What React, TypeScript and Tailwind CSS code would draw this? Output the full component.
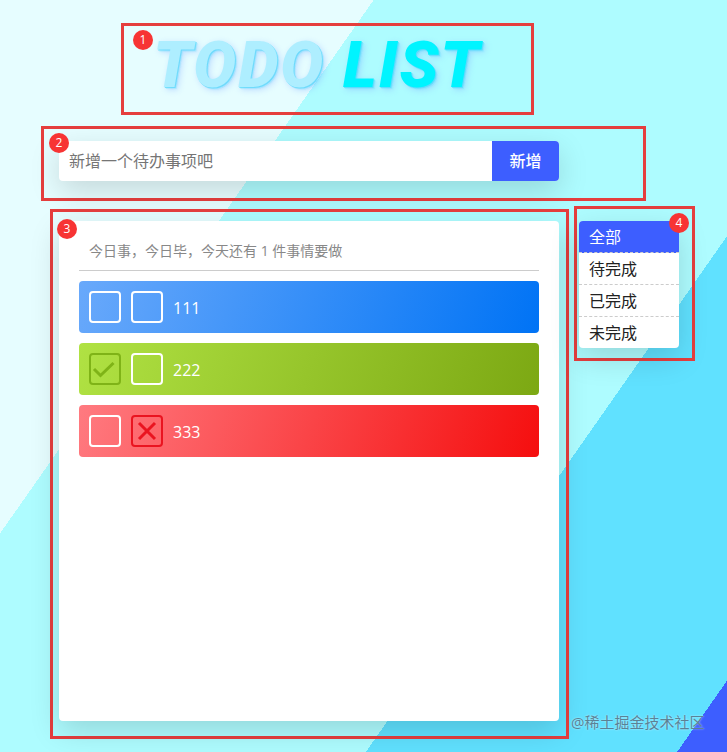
import React from "react";

const font = "font-['Open_Sans','Noto_Sans_CJK_SC',sans-serif]";

function Badge({ n, className }: { n: number; className: string }) {
  return (
    <span className={`absolute z-10 flex h-5 w-5 items-center justify-center rounded-full bg-[#f73434] text-xs text-white ${className}`}>
      {n}
    </span>
  );
}

function Box({ mark }: { mark: "check" | "cross" | null }) {
  if (mark === "check") {
    return (
      <span className="h-8 w-8 rounded border-2 border-[#7fb317]">
        <svg width="28" height="28" viewBox="0 0 28 28" fill="none" stroke="#7fb317" strokeWidth="3">
          <path d="M3 14l6.5 6.5L22.5 8" />
        </svg>
      </span>
    );
  }
  if (mark === "cross") {
    return (
      <span className="h-8 w-8 rounded border-2 border-[#ea1420]">
        <svg width="28" height="28" viewBox="0 0 28 28" fill="none" stroke="#ea1420" strokeWidth="3">
          <path d="M6 6l16 16M22 6L6 22" />
        </svg>
      </span>
    );
  }
  return <span className="h-8 w-8 rounded border-2 border-white" />;
}

function Row({ bg, text, a, b }: { bg: string; text: string; a: "check" | null; b: "cross" | null }) {
  return (
    <div className={`flex h-[52px] items-center gap-2.5 rounded pl-2.5 text-white ${bg}`}>
      <Box mark={a} />
      <Box mark={b} />
      <span className="pt-0.5 text-base">{text}</span>
    </div>
  );
}

export default function App() {
  return (
    <div className={`relative h-[752px] w-[727px] overflow-hidden bg-[linear-gradient(125deg,#e6fdff_306px,#aefcff_306px,#aefcff_731px,#60e1ff_731px,#60e1ff_986px,#3d5eff_986px)] pt-[23px] ${font}`}>
      <div className="relative ml-[121px] h-[92px] w-[413px] border-[3px] border-[#e53e3e] pl-[29px]">
        <Badge n={1} className="left-[9px] top-[4px]" />
        <h1 className="h-[85px] w-[345px] bg-[linear-gradient(125deg,#aeeeff_165px,#00f4ff_165px)] bg-clip-text font-['Roboto',sans-serif] text-[64px] font-black italic leading-[79px] tracking-[2px] text-transparent [filter:drop-shadow(1px_1px_0_rgba(60,215,250,0.22))_drop-shadow(1px_1px_0_rgba(60,215,250,0.22))_drop-shadow(1px_1px_0_rgba(60,215,250,0.22))_drop-shadow(1px_1px_0_rgba(60,215,250,0.22))_drop-shadow(2px_2px_3px_rgba(130,170,255,0.4))]">
          TODO LIST
        </h1>
      </div>

      <div className="relative ml-[41px] mt-[11px] h-[75px] w-[605px] border-[3px] border-[#e53e3e] pl-[15px] pt-3">
        <Badge n={2} className="left-[5px] top-1" />
        <div className="flex h-10 w-[500px] overflow-hidden rounded bg-white shadow-[0_10px_30px_rgba(0,0,0,0.15)]">
          <input
            className="h-10 w-[433px] pl-2.5 text-base text-[#333] outline-none placeholder:text-[#757575]"
            placeholder="新增一个待办事项吧"
          />
          <button className="h-10 w-[67px] bg-[#3d5eff] text-base font-medium text-white">新增</button>
        </div>
      </div>

      <div className="mt-[5px] flex items-start">
        <div className="relative ml-[50px] mt-[3px] h-[530px] w-[519px] border-[3px] border-[#e53e3e] pl-[6px] pt-[9px]">
          <Badge n={3} className="left-1 top-[7px]" />
          <div className="h-[500px] w-[500px] rounded bg-white px-5 shadow-[0_10px_30px_rgba(0,0,0,0.15)]">
            <div className="h-[50px] border-b border-[#ccc] pl-2.5 pt-[19px] text-sm leading-[22px] text-[#888]">
              今日事，今日毕，今天还有 1 件事情要做
            </div>
            <div className="mt-2.5 flex flex-col gap-2.5">
              <Row bg="bg-[linear-gradient(110deg,#69a9fb,#0073f5)]" text="111" a={null} b={null} />
              <Row bg="bg-[linear-gradient(110deg,#b0e243,#7ca813)]" text="222" a="check" b={null} />
              <Row bg="bg-[linear-gradient(110deg,#ff7a80,#f50e0e)]" text="333" a={null} b="cross" />
            </div>
          </div>
        </div>

        <div className="relative ml-[5px] h-[155px] w-[121px] border-[3px] border-[#e53e3e] pl-0.5 pt-3">
          <Badge n={4} className="left-[92px] top-1" />
          <div className="w-[100px] overflow-hidden rounded bg-white text-base leading-[33px] shadow-[0_10px_30px_rgba(0,0,0,0.15)]">
            <div className="h-8 border-b border-dashed border-[#ccc] bg-[#3d5eff] pl-2.5 text-white">全部</div>
            <div className="h-8 border-b border-dashed border-[#ccc] pl-2.5 text-[#222]">待完成</div>
            <div className="h-8 border-b border-dashed border-[#ccc] pl-2.5 text-[#222]">已完成</div>
            <div className="h-[31px] pl-2.5 text-[#222]">未完成</div>
          </div>
        </div>
      </div>

      <span className="absolute left-[571px] top-[711px] text-[15px] text-[#5b8296] [text-shadow:0_0_2px_rgba(255,255,255,0.6)]">
        @稀土掘金技术社区
      </span>
    </div>
  );
}
